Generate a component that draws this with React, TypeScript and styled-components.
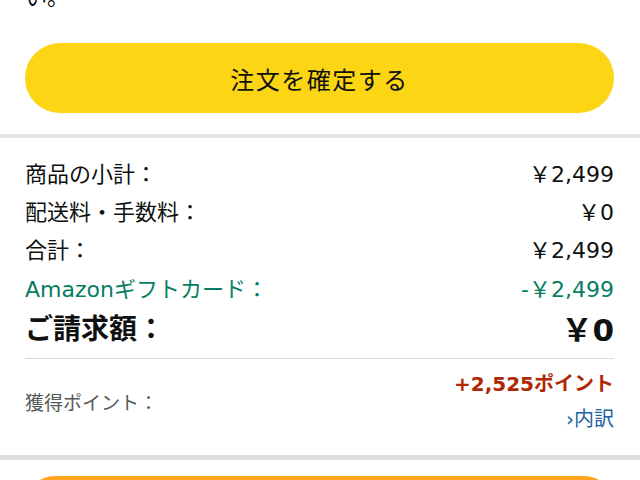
import styled, { createGlobalStyle } from "styled-components";

const GlobalStyle = createGlobalStyle`
  html, body {
    margin: 0;
    padding: 0;
    background: #ffffff;
    overflow: hidden;
  }
  body {
    font-family: "DejaVu Sans", "Noto Sans CJK JP", sans-serif;
    color: #0f1111;
  }
`;

const Page = styled.div`
  width: 640px;
  height: 480px;
  overflow: hidden;
  background: #ffffff;
`;

const Section = styled.div`
  padding: 0 26px 0 25px;
`;

const Note = styled.p`
  margin: -17px 0 0;
  font-size: 22px;
  line-height: 30px;
`;

const PlaceOrderButton = styled.button`
  display: flex;
  align-items: center;
  justify-content: center;
  width: 100%;
  height: 70px;
  margin: 30px 0 21px;
  border: none;
  border-radius: 35px;
  background: #fcd514;
  color: #0f1111;
  font-family: "Noto Sans CJK JP", sans-serif;
  font-size: 24px;
  letter-spacing: 1.5px;
`;

const Band = styled.div`
  height: 4px;
  background: #e0e3e3;
`;

const Summary = styled.div`
  padding: 18px 26px 0 25px;
`;

const Row = styled.div<{ $tone?: "green" | "total"; $h?: number }>`
  display: flex;
  justify-content: space-between;
  align-items: center;
  height: ${(p) => p.$h ?? 38}px;
  line-height: 30px;
  font-size: ${(p) => (p.$tone === "total" ? "28px" : "22px")};
  font-weight: ${(p) => (p.$tone === "total" ? 700 : 400)};
  color: ${(p) => (p.$tone === "green" ? "#067d62" : "#0f1111")};
`;

const Amount = styled.span<{ $big?: boolean }>`
  font-size: ${(p) => (p.$big ? "31px" : "inherit")};
`;

const Rule = styled.div`
  height: 1px;
  margin-top: 8px;
  background: #d5d9d9;
`;

const Points = styled.div`
  display: flex;
  justify-content: space-between;
  align-items: center;
  padding: 10px 0 21px;
`;

const PointsLabel = styled.span`
  font-size: 19px;
  color: #565959;
`;

const PointsRight = styled.div`
  display: flex;
  flex-direction: column;
  align-items: flex-end;
  gap: 5px;
`;

const PointsValue = styled.span`
  font-size: 20px;
  font-weight: 700;
  line-height: 30px;
  color: #b12704;
`;

const Breakdown = styled.a`
  font-size: 20px;
  line-height: 30px;
  color: #2162a1;
  text-decoration: none;
`;

const BottomBand = styled.div`
  height: 5px;
  background: #dcdfdf;
`;

const NextButton = styled.div`
  height: 60px;
  margin: 16px 26px 0 25px;
  border-radius: 30px;
  background: #ffa41c;
`;

const App = () => {
  return (
    <Page>
      <GlobalStyle />
      <Section>
        <Note>い。</Note>
        <PlaceOrderButton>注文を確定する</PlaceOrderButton>
      </Section>
      <Band />
      <Summary>
        <Row>
          <span>商品の小計：</span>
          <span>￥2,499</span>
        </Row>
        <Row>
          <span>配送料・手数料：</span>
          <span>￥0</span>
        </Row>
        <Row>
          <span>合計：</span>
          <span>￥2,499</span>
        </Row>
        <Row $tone="green" $h={40}>
          <span>Amazonギフトカード：</span>
          <span>-￥2,499</span>
        </Row>
        <Row $tone="total" $h={40}>
          <span>ご請求額：</span>
          <Amount $big>￥0</Amount>
        </Row>
        <Rule />
        <Points>
          <PointsLabel>獲得ポイント：</PointsLabel>
          <PointsRight>
            <PointsValue>+2,525ポイント</PointsValue>
            <Breakdown href="#">›内訳</Breakdown>
          </PointsRight>
        </Points>
      </Summary>
      <BottomBand />
      <NextButton />
    </Page>
  );
};

export default App;
